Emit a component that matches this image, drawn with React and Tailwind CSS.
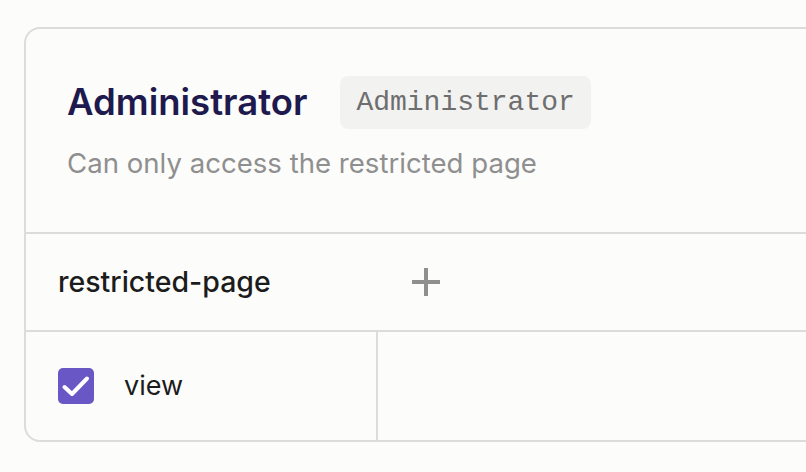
const sans = { fontFamily: "Inter, 'Noto Sans', sans-serif" };

function CheckBox() {
  return (
    <div className="w-[36px] h-[36px] rounded-[5px] bg-[#6a57c6] flex items-center justify-center shrink-0">
      <svg width="36" height="36" viewBox="0 0 36 36" fill="none">
        <path d="M6.5 19 L14 26 L29 10.5" stroke="#fff" strokeWidth="4" strokeLinecap="round" strokeLinejoin="round" />
      </svg>
    </div>
  );
}

export default function App() {
  return (
    <div className="min-h-screen w-full overflow-hidden bg-[#fcfcfb] pt-[27px] pl-[24px]" style={sans}>
      <div className="w-[840px] border-2 border-[#dcdcdb] rounded-[16px] bg-[#fcfcfb]">
        {/* header */}
        <div className="h-[203px] pt-[47px] pl-[41px]">
          <div className="flex items-center gap-[33px]">
            <h1 className="text-[36.5px] font-semibold text-[#1e1a4e] leading-none">Administrator</h1>
            <span
              className="h-[53px] px-[16px] flex items-center rounded-[8px] bg-[#f2f2f1] text-[28px] text-[#6e6e6e]"
              style={{ fontFamily: "'Liberation Mono', 'DejaVu Sans Mono', monospace" }}
            >
              Administrator
            </span>
          </div>
          <p className="mt-[16px] text-[27.6px] leading-[36px] text-[#8f8f8f]">Can only access the restricted page</p>
        </div>

        {/* resource row */}
        <div className="flex h-[98px] border-t-2 border-[#dcdcdb] items-center">
          <div className="w-[350px] pl-[32px] text-[28.5px] font-medium text-[#1c1c1c]">restricted-page</div>
          <button className="ml-[36px] text-[#8f8f8f]">
            <svg width="28" height="28" viewBox="0 0 28 28">
              <rect x="12" y="0" width="4" height="28" fill="currentColor" />
              <rect x="0" y="12" width="28" height="4" fill="currentColor" />
            </svg>
          </button>
        </div>

        {/* permission row */}
        <div className="flex h-[110px] border-t-2 border-[#dcdcdb]">
          <div className="w-[350px] pl-[32px] flex items-center gap-[30px]">
            <CheckBox />
            <span className="text-[27px] text-[#1c1c1c]">view</span>
          </div>
          <div className="flex-1 border-l-2 border-[#dcdcdb]" />
        </div>
      </div>
    </div>
  );
}
